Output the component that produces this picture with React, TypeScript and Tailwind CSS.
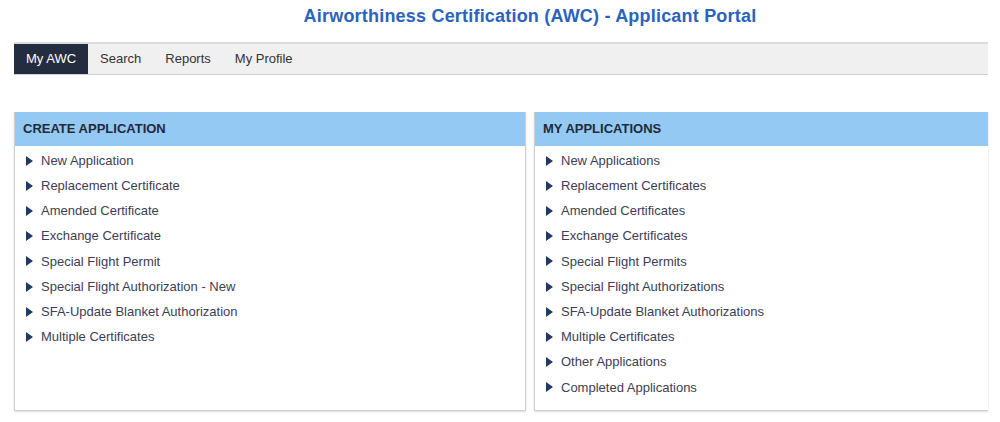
export default function App() {
  const left = ["New Application","Replacement Certificate","Amended Certificate","Exchange Certificate","Special Flight Permit","Special Flight Authorization - New","SFA-Update Blanket Authorization","Multiple Certificates"];
  const right = ["New Applications","Replacement Certificates","Amended Certificates","Exchange Certificates","Special Flight Permits","Special Flight Authorizations","SFA-Update Blanket Authorizations","Multiple Certificates","Other Applications","Completed Applications"];
  const Item = ({ t }: { t: string }) => (
    <div className="flex items-center h-[25.2px]">
      <svg width="7" height="10" viewBox="0 0 7 10" className="ml-[11px] mr-[8px]"><path d="M0 0L7 5L0 10Z" fill="#1f3a66" /></svg>
      <span className="text-[13px] text-[#3d3d55]">{t}</span>
    </div>
  );
  return (
    <div className="w-[1000px] h-[422px] bg-white overflow-hidden" style={{ fontFamily: '"Liberation Sans", Arial, sans-serif' }}>
      <div className="h-[42px] pl-[60px] pt-[3px] text-center text-[18px] font-bold text-[#2a63be] tracking-[0.2px]">Airworthiness Certification (AWC) - Applicant Portal</div>
      <div className="ml-[14px] w-[974px] h-[33px] bg-[#f0f0f0] border-t-2 border-[#dcdcdc] border-b border-b-[#d0d0d0] flex text-[13px] text-[#333]">
        <div className="bg-[#242c40] text-white px-[12px] flex items-center">My AWC</div>
        <div className="px-[12px] flex items-center">Search</div>
        <div className="px-[12px] flex items-center">Reports</div>
        <div className="px-[12px] flex items-center">My Profile</div>
      </div>
      <div className="ml-[14px] mt-[37px] w-[974px] flex gap-[8px]">
        <div className="w-[512px] h-[299px] border border-[#d0d0d0] border-t-0 shadow-[0_1px_2px_rgba(0,0,0,0.15)]">
          <div className="h-[34px] bg-[#93c9f2] flex items-center pl-[8px] text-[13px] font-bold text-[#1f2a3a]">CREATE APPLICATION</div>
          <div className="pt-[2px]">{left.map(t => <Item key={t} t={t} />)}</div>
        </div>
        <div className="flex-1 h-[299px] border-l border-b border-[#d0d0d0] shadow-[0_1px_2px_rgba(0,0,0,0.15)]">
          <div className="h-[34px] bg-[#93c9f2] flex items-center pl-[8px] text-[13px] font-bold text-[#1f2a3a]">MY APPLICATIONS</div>
          <div className="pt-[2px]">{right.map(t => <Item key={t} t={t} />)}</div>
        </div>
      </div>
    </div>
  );
}
